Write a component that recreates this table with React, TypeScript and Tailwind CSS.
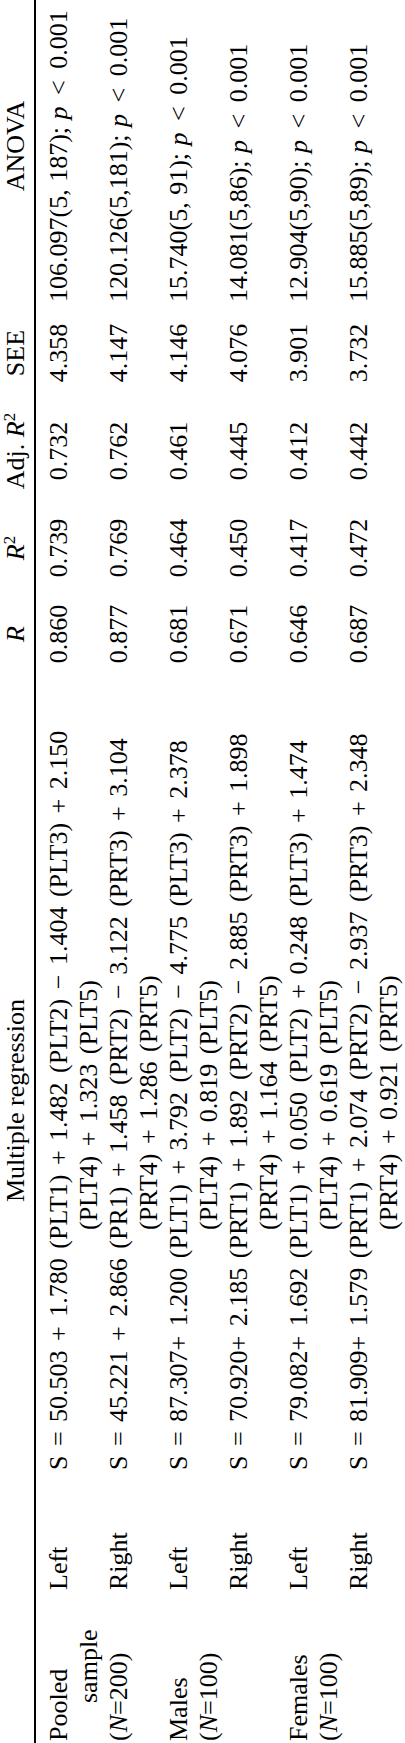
import React from "react";

type Row = {
  group?: React.ReactNode;
  side: string;
  f1: string;
  f2: string;
  r: string;
  r2: string;
  adj: string;
  see: string;
  an: string;
};

const N = () => <i>N</i>;

const Sup = () => (
  <span className="relative -top-[9px] text-[17px] leading-none">2</span>
);

const rows: Row[] = [
  {
    group: (
      <>
        <div>Pooled</div>
        <div className="pl-[38px]">sample</div>
        <div>
          (<N />=200)
        </div>
      </>
    ),
    side: "Left",
    f1: "S = 50.503 + 1.780 (PLT1) + 1.482 (PLT2) \u2212 1.404 (PLT3) + 2.150",
    f2: "(PLT4) + 1.323 (PLT5)",
    r: "0.860",
    r2: "0.739",
    adj: "0.732",
    see: "4.358",
    an: "106.097(5, 187);",
  },
  {
    side: "Right",
    f1: "S = 45.221 + 2.866 (PR1) + 1.458 (PRT2) \u2212 3.122 (PRT3) + 3.104",
    f2: "(PRT4) + 1.286 (PRT5)",
    r: "0.877",
    r2: "0.769",
    adj: "0.762",
    see: "4.147",
    an: "120.126(5,181);",
  },
  {
    group: (
      <>
        <div>Males</div>
        <div>
          (<N />=100)
        </div>
      </>
    ),
    side: "Left",
    f1: "S = 87.307+ 1.200 (PLT1) + 3.792 (PLT2) \u2212 4.775 (PLT3) + 2.378",
    f2: "(PLT4) + 0.819 (PLT5)",
    r: "0.681",
    r2: "0.464",
    adj: "0.461",
    see: "4.146",
    an: "15.740(5, 91);",
  },
  {
    side: "Right",
    f1: "S = 70.920+ 2.185 (PRT1) + 1.892 (PRT2) \u2212 2.885 (PRT3) + 1.898",
    f2: "(PRT4) + 1.164 (PRT5)",
    r: "0.671",
    r2: "0.450",
    adj: "0.445",
    see: "4.076",
    an: "14.081(5,86);",
  },
  {
    group: (
      <>
        <div>Females</div>
        <div>
          (<N />=100)
        </div>
      </>
    ),
    side: "Left",
    f1: "S = 79.082+ 1.692 (PLT1) + 0.050 (PLT2) + 0.248 (PLT3) + 1.474",
    f2: "(PLT4) + 0.619 (PLT5)",
    r: "0.646",
    r2: "0.417",
    adj: "0.412",
    see: "3.901",
    an: "12.904(5,90);",
  },
  {
    side: "Right",
    f1: "S = 81.909+ 1.579 (PRT1) + 2.074 (PRT2) \u2212 2.937 (PRT3) + 2.348",
    f2: "(PRT4) + 0.921 (PRT5)",
    r: "0.687",
    r2: "0.472",
    adj: "0.442",
    see: "3.732",
    an: "15.885(5,89);",
  },
];

const cols =
  "grid grid-cols-[153px_120px_787px_98px_74px_120px_76px_338px]";

export default function App() {
  return (
    <div className="relative w-[405px] h-[1743px] overflow-hidden bg-white">
      <div className="absolute left-0 top-0 w-[1766px] h-[405px] origin-top-left translate-y-[1743px] -rotate-90 bg-white text-black font-['Liberation_Serif','Times_New_Roman',serif] text-[26px] leading-[30px]">
        {/* header */}
        <div className={`${cols} pt-[1px] h-[31px] whitespace-nowrap`}>
          <div />
          <div />
          <div className="pl-[268px]">Multiple regression</div>
          <div className="text-center">
            <i>R</i>
          </div>
          <div className="text-center">
            <i>R</i>
            <Sup />
          </div>
          <div className="text-center">
            Adj. <i>R</i>
            <Sup />
          </div>
          <div className="text-center">SEE</div>
          <div className="text-center">ANOVA</div>
        </div>
        <div className="mt-[3px] h-[2px] bg-black" />
        <div className={`${cols} mt-[8px] grid-rows-[repeat(6,60px)] whitespace-nowrap`}>
          {rows.map((row, i) => (
            <React.Fragment key={i}>
              {row.group && (
                <div className="col-start-1 row-span-2 pl-[2px]">{row.group}</div>
              )}
              <div className="col-start-2">{row.side}</div>
              <div className="[word-spacing:3px]">
                <div>{row.f1}</div>
                <div className="pl-[240px]">{row.f2}</div>
              </div>
              <div className="text-center">{row.r}</div>
              <div className="text-center">{row.r2}</div>
              <div className="text-center">{row.adj}</div>
              <div className="text-center">{row.see}</div>
              <div className="pl-[13px] [word-spacing:1px]">
                {row.an} <i>p</i> <span className="mx-[4px]">&lt;</span> 0.001
              </div>
            </React.Fragment>
          ))}
        </div>
      </div>
    </div>
  );
}
